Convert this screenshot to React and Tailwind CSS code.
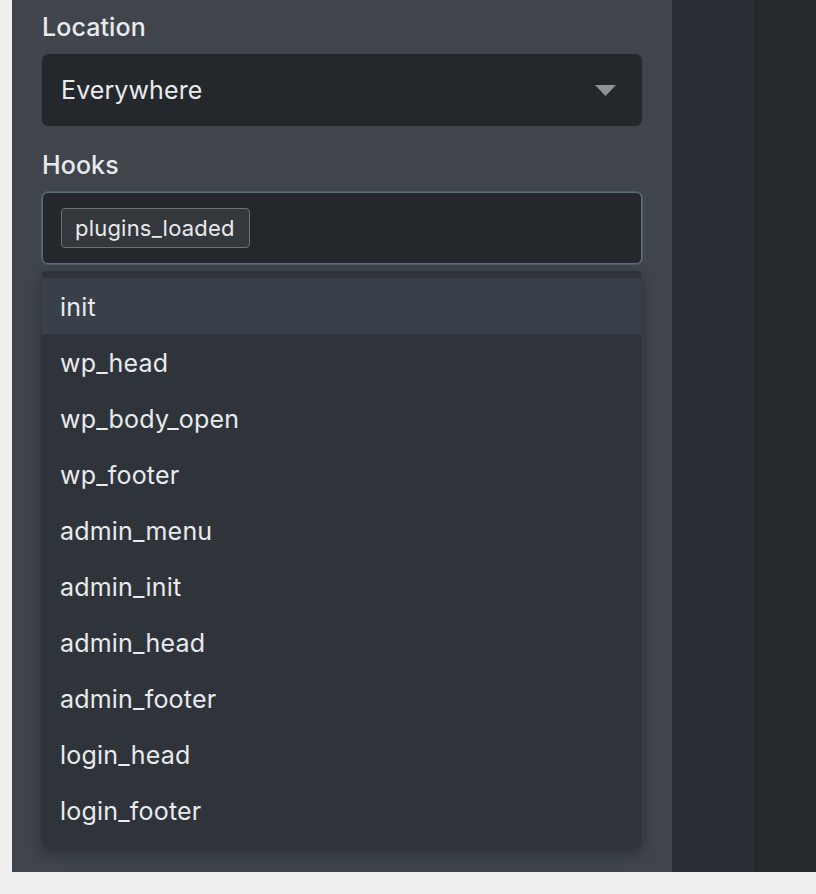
import React from 'react';

const hooks = [
  'init',
  'wp_head',
  'wp_body_open',
  'wp_footer',
  'admin_menu',
  'admin_init',
  'admin_head',
  'admin_footer',
  'login_head',
  'login_footer',
];

const App = () => {
  return (
    <div
      className="h-[894px] w-full bg-[#efefef] text-[#e8eaed]"
      style={{ fontFamily: 'Inter, "Noto Sans", sans-serif' }}
    >
      <div className="flex h-[872px]">
        <div className="w-[12px] bg-[#efefef]" />

        {/* settings panel */}
        <div className="w-[660px] bg-[#40454c] px-[30px] pt-[12px]">
          <div className="text-[25px] leading-[30px] font-medium tracking-[0.1px]">Location</div>
          <div className="mt-[12px] flex h-[72px] items-center justify-between rounded-[6px] bg-[#24282c] pl-[19px] pr-[26px]">
            <span className="pt-[2px] text-[25px] tracking-[0.1px]">Everywhere</span>
            <svg width="21" height="11" viewBox="0 0 21 11">
              <path d="M0 0h21L10.5 11z" fill="#8f9399" />
            </svg>
          </div>

          <div className="mt-[24px] text-[25px] leading-[30px] font-medium tracking-[0.1px]">Hooks</div>
          <div className="mt-[12px] flex h-[72px] items-center rounded-[6px] border border-[#5d6e7e] bg-[#24282c] pl-[18px] shadow-[0_0_0_1px_rgba(110,135,160,0.35)]">
            <span className="rounded-[4px] border border-[#6c7076] bg-[#34383d] pl-[13px] pr-[14px] text-[22px] leading-[38px] tracking-[0.2px]">
              plugins_loaded
            </span>
          </div>

          {/* hooks dropdown */}
          <div className="mt-[7px] w-[599px] rounded-[4px] bg-[#2f343b] pt-[7px] pb-[9px] shadow-[0_6px_16px_rgba(0,0,0,0.35)]">
            {hooks.map((hook, i) => (
              <div
                key={hook}
                className={
                  i === 0
                    ? 'flex h-[56px] items-center bg-[#3a4049] pl-[18px] pt-[3px] text-[25px] tracking-[0.2px]'
                    : 'flex h-[56px] items-center pl-[18px] pt-[3px] text-[25px] tracking-[0.2px]'
                }
              >
                {hook}
              </div>
            ))}
          </div>
        </div>

        <div className="w-[82px] bg-[#2a2f36]" />
        <div className="w-[4px] bg-[#23272b]" />
        <div className="flex-1 bg-[#25292c]" />
      </div>
    </div>
  );
};

export default App;
